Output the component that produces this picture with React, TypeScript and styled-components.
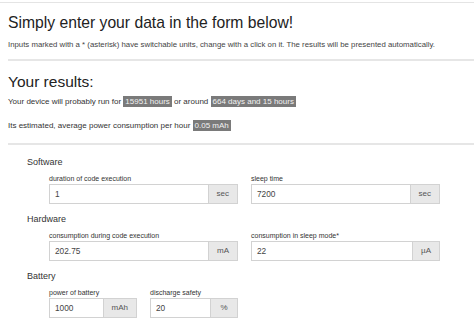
import styled, { createGlobalStyle } from "styled-components";

const GlobalStyle = createGlobalStyle`
  html, body {
    margin: 0;
    padding: 0;
    background: #fff;
  }
  body {
    font-family: "Liberation Sans", Arial, sans-serif;
    color: #333;
  }
`;

const Page = styled.div`
  margin-top: 2px;
  border-top: 1px solid #e4e4e4;
  padding: 0 8px;
  width: 474px;
  box-sizing: border-box;
`;

const Title = styled.h1`
  margin: 11px 0 0;
  font-size: 15.7px;
  line-height: 18px;
  font-weight: normal;
  color: #222;
`;

const Hint = styled.p`
  margin: 8px 0 0;
  font-size: 7.8px;
  line-height: 10px;
  color: #444;
  white-space: nowrap;
`;

const Rule = styled.hr<{ $top: number }>`
  margin: ${(p) => p.$top}px -8px 0 0;
  border: 0;
  border-top: 2px solid #e6e6e6;
`;

const ResultLine = styled.div<{ $top: number }>`
  margin-top: ${(p) => p.$top}px;
  font-size: 8px;
  line-height: 14px;
  color: #333;
  white-space: nowrap;
`;

const Badge = styled.span`
  display: inline-block;
  background: #7a7a7a;
  color: #f2f2f2;
  padding: 0 2px;
  line-height: 11px;
`;

const ResultsTitle = styled(Title)`
  margin-top: 12px;
  font-size: 15.5px;
`;

const Fieldset = styled.section<{ $top: number }>`
  margin-top: ${(p) => p.$top}px;
  padding-left: 19px;
`;

const Legend = styled.div`
  font-size: 9px;
  line-height: 12px;
  color: #333;
`;

const Grid = styled.div`
  display: grid;
  grid-template-columns: repeat(4, 88px);
  column-gap: 13px;
  margin: 5.5px 0 0 22px;
`;

const Field = styled.div<{ $span: number }>`
  grid-column: span ${(p) => p.$span};
`;

const Label = styled.div`
  font-size: 7px;
  line-height: 9px;
  color: #333;
  margin-bottom: 1.5px;
  white-space: nowrap;
`;

const InputGroup = styled.div`
  display: flex;
  height: 20px;
  box-sizing: border-box;
  border: 1px solid #d2d2d2;
`;

const Value = styled.div`
  flex: 1;
  padding-left: 5px;
  font-size: 8.3px;
  line-height: 18px;
  color: #444;
  background: #fff;
`;

const Addon = styled.div`
  min-width: 27px;
  box-sizing: border-box;
  padding: 0 8px;
  background: #e8e8e8;
  border-left: 1px solid #d2d2d2;
  font-size: 8px;
  line-height: 18px;
  text-align: center;
  color: #555;
`;

type Input = { label: string; value: string; unit: string; span: number };

const sections: { name: string; top: number; inputs: Input[] }[] = [
  {
    name: "Software",
    top: 11,
    inputs: [
      { label: "duration of code execution", value: "1", unit: "sec", span: 2 },
      { label: "sleep time", value: "7200", unit: "sec", span: 2 },
    ],
  },
  {
    name: "Hardware",
    top: 9,
    inputs: [
      { label: "consumption during code execution", value: "202.75", unit: "mA", span: 2 },
      { label: "consumption in sleep mode*", value: "22", unit: "µA", span: 2 },
    ],
  },
  {
    name: "Battery",
    top: 9,
    inputs: [
      { label: "power of battery", value: "1000", unit: "mAh", span: 1 },
      { label: "discharge safety", value: "20", unit: "%", span: 1 },
    ],
  },
];

export default function App() {
  return (
    <>
      <GlobalStyle />
      <Page>
        <Title>Simply enter your data in the form below!</Title>
        <Hint>
          Inputs marked with a * (asterisk) have switchable units, change with a click on it. The
          results will be presented automatically.
        </Hint>
        <Rule $top={9} />
        <ResultsTitle>Your results:</ResultsTitle>
        <ResultLine $top={4}>
          Your device will probably run for <Badge>15951 hours</Badge> or around{" "}
          <Badge>664 days and 15 hours</Badge>
        </ResultLine>
        <ResultLine $top={10}>
          Its estimated, average power consumption per hour <Badge>0.05 mAh</Badge>
        </ResultLine>
        <Rule $top={10} />
        {sections.map((s) => (
          <Fieldset key={s.name} $top={s.top}>
            <Legend>{s.name}</Legend>
            <Grid>
              {s.inputs.map((f) => (
                <Field key={f.label} $span={f.span}>
                  <Label>{f.label}</Label>
                  <InputGroup>
                    <Value>{f.value}</Value>
                    <Addon>{f.unit}</Addon>
                  </InputGroup>
                </Field>
              ))}
            </Grid>
          </Fieldset>
        ))}
      </Page>
    </>
  );
}
